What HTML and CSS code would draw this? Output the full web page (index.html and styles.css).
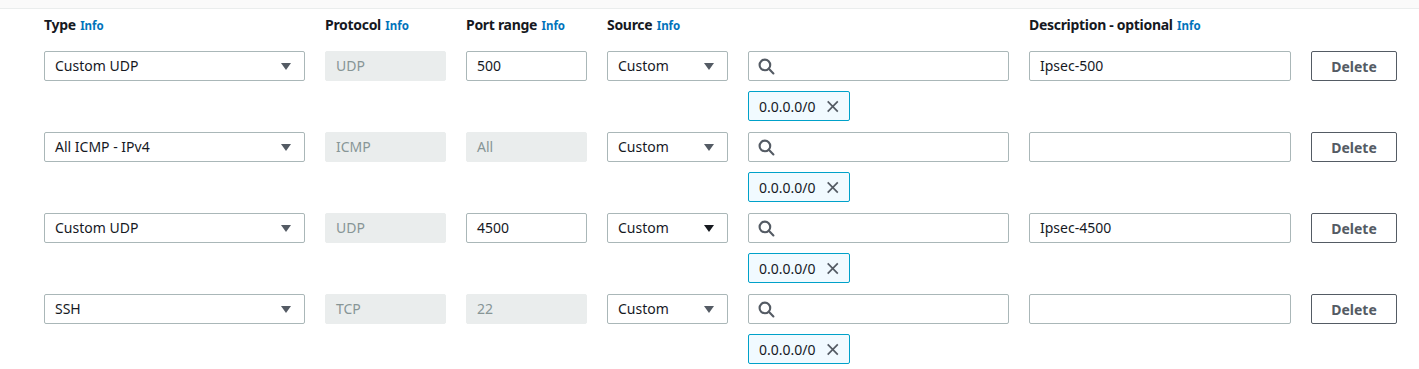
FILE: index.html
```html
<!DOCTYPE html>
<html lang="en">
<head>
  <meta charset="UTF-8" />
  <meta name="viewport" content="width=device-width, initial-scale=1.0"/>
  <title>Inbound rules</title>
  <link rel="stylesheet" href="styles.css">
</head>
<body>
  <div class="top-strip"></div>
  <div class="rules">
    <div class="rule-grid labels">
      <div class="label">Type <a class="info">Info</a></div>
      <div class="label">Protocol <a class="info">Info</a></div>
      <div class="label">Port range <a class="info">Info</a></div>
      <div class="label">Source <a class="info">Info</a></div>
      <div></div>
      <div class="label">Description - optional <a class="info">Info</a></div>
      <div></div>
    </div>

    <div class="rule-grid rule">
      <div class="select"><span>Custom UDP</span><i class="caret"></i></div>
      <div class="field disabled">UDP</div>
      <div class="field">500</div>
      <div class="select"><span>Custom</span><i class="caret"></i></div>
      <div class="field search"><svg viewBox="0 0 16 16"><circle cx="6.5" cy="6.5" r="5"/><path d="M10.2 10.2l4.3 4.3"/></svg></div>
      <div class="field">Ipsec-500</div>
      <button class="delete">Delete</button>
      <div class="token">0.0.0.0/0 <svg viewBox="0 0 16 16"><path d="M2 2l12 12M14 2L2 14"/></svg></div>
    </div>

    <div class="rule-grid rule">
      <div class="select"><span>All ICMP - IPv4</span><i class="caret"></i></div>
      <div class="field disabled">ICMP</div>
      <div class="field disabled">All</div>
      <div class="select"><span>Custom</span><i class="caret"></i></div>
      <div class="field search"><svg viewBox="0 0 16 16"><circle cx="6.5" cy="6.5" r="5"/><path d="M10.2 10.2l4.3 4.3"/></svg></div>
      <div class="field"></div>
      <button class="delete">Delete</button>
      <div class="token">0.0.0.0/0 <svg viewBox="0 0 16 16"><path d="M2 2l12 12M14 2L2 14"/></svg></div>
    </div>

    <div class="rule-grid rule">
      <div class="select"><span>Custom UDP</span><i class="caret"></i></div>
      <div class="field disabled">UDP</div>
      <div class="field">4500</div>
      <div class="select hover"><span>Custom</span><i class="caret"></i></div>
      <div class="field search"><svg viewBox="0 0 16 16"><circle cx="6.5" cy="6.5" r="5"/><path d="M10.2 10.2l4.3 4.3"/></svg></div>
      <div class="field">Ipsec-4500</div>
      <button class="delete">Delete</button>
      <div class="token">0.0.0.0/0 <svg viewBox="0 0 16 16"><path d="M2 2l12 12M14 2L2 14"/></svg></div>
    </div>

    <div class="rule-grid rule">
      <div class="select"><span>SSH</span><i class="caret"></i></div>
      <div class="field disabled">TCP</div>
      <div class="field disabled">22</div>
      <div class="select"><span>Custom</span><i class="caret"></i></div>
      <div class="field search"><svg viewBox="0 0 16 16"><circle cx="6.5" cy="6.5" r="5"/><path d="M10.2 10.2l4.3 4.3"/></svg></div>
      <div class="field"></div>
      <button class="delete">Delete</button>
      <div class="token">0.0.0.0/0 <svg viewBox="0 0 16 16"><path d="M2 2l12 12M14 2L2 14"/></svg></div>
    </div>
  </div>
</body>
</html>
```

FILE: styles.css
```css
:root {
  --text: #16191f;
  --muted: #545b64;
  --border: #aab7b8;
  --disabled-bg: #eaeded;
  --disabled-text: #879596;
  --link: #0073bb;
  --token-border: #00a1c9;
  --token-bg: #f1faff;
}
* { box-sizing:border-box; margin:0; padding:0; }
body {
  background:#fff;
  font-family:'Noto Sans','Open Sans',sans-serif;
  font-size:14px; color:var(--text);
}
.top-strip {
  height:9px; background:#fafafa;
  border-bottom:1px solid #eaeded;
}
.rules { padding:5px 0 0 44px; }
.rule-grid {
  display:grid;
  grid-template-columns:261px 121px 121px 121px 261px 262px 86px;
  column-gap:20px;
}
.labels { height:37px; align-items:start; }
.label {
  font-weight:700; font-size:14px; line-height:21px;
  letter-spacing:-0.3px; white-space:nowrap;
}
.info {
  color:var(--link); font-size:11.5px; font-weight:700;
  letter-spacing:0; margin-left:1px;
}
.rule { row-gap:10px; margin-bottom:11px; }
.select, .field {
  height:30px; border:1px solid var(--border); border-radius:2px;
  display:flex; align-items:center;
  padding:0 10px; line-height:20px;
}
.select { justify-content:space-between; padding-right:13px; }
.caret {
  width:0; height:0;
  border-left:5px solid transparent; border-right:5px solid transparent;
  border-top:7px solid var(--muted);
}
.select.hover .caret { border-top-color:var(--text); }
.field.disabled {
  background:var(--disabled-bg); border-color:var(--disabled-bg);
  color:var(--disabled-text);
}
.search { padding-left:9px; }
.search svg {
  width:17px; height:17px;
  fill:none; stroke:var(--muted); stroke-width:2; stroke-linecap:round;
}
.delete {
  height:30px; background:#fff;
  border:1px solid var(--muted); border-radius:2px;
  color:var(--muted); font:inherit; font-weight:700; font-size:14px;
}
.token {
  grid-column:5; justify-self:start;
  height:30px; width:102px;
  border:1px solid var(--token-border); border-radius:2px;
  background:var(--token-bg);
  display:flex; align-items:center; gap:10px;
  padding:0 10px;
}
.token svg {
  width:15px; height:15px;
  fill:none; stroke:var(--muted); stroke-width:2;
}
```
